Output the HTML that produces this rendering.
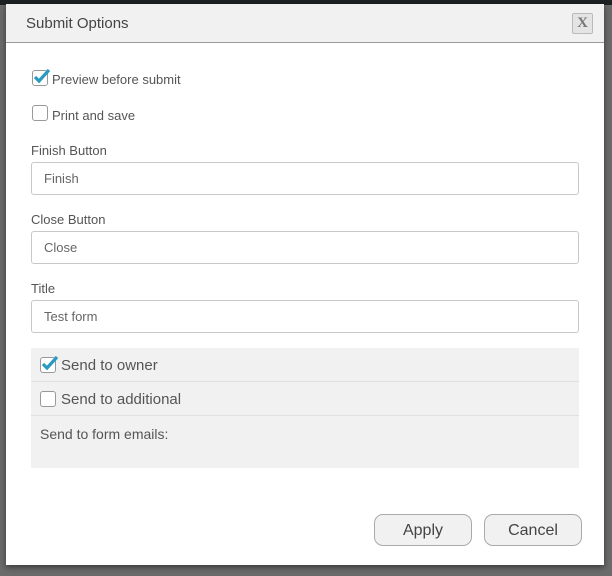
<!DOCTYPE html>
<html><head><style>
*{box-sizing:border-box;margin:0;padding:0}
body{width:612px;height:576px;background:#6b6b6b;position:relative;overflow:hidden;font-family:"Liberation Sans",sans-serif;color:#333}
.top{position:absolute;left:0;top:0;width:612px;height:5px;background:#1d2225}
.dlg{position:absolute;left:6px;top:4px;width:598px;height:561px;background:#fff;box-shadow:0 2px 6px rgba(0,0,0,.5)}
.hd{height:39px;background:#f1f1f1;border-bottom:1px solid #9a9a9a;position:relative}
.hd span{position:absolute;left:20px;top:11px;font-size:15px;color:#444}
.x{position:absolute;right:11px;top:9px;width:21px;height:21px;border:1px solid #bbb;background:#e4e4e4;border-radius:2px;font-weight:bold;color:#777;font-size:15px;text-align:center;line-height:19px;font-family:"Liberation Serif",serif}
.a{position:absolute;font-size:13px;color:#555}
.cb{position:absolute;width:16px;height:16px;border:1px solid #999;border-radius:3px;background:#fff}
.inp{position:absolute;left:25px;width:548px;height:33px;border:1px solid #c8c8c8;border-radius:3px;font-size:13px;color:#666;padding:8px 12px}
.pan{position:absolute;left:25px;top:344px;width:548px;height:120px;background:#f1f1f1}
.row{height:34px;border-bottom:1px solid #e0e0e0;position:relative}
.btn{position:absolute;top:510px;width:98px;height:32px;border:1px solid #aaa;border-radius:9px;background:#f1f1f1;font-size:16px;text-align:center;line-height:32px;color:#444}
svg{position:absolute}
</style></head><body>
<div class="top"></div>
<div class="dlg">
<div class="hd"><span>Submit Options</span><div class="x">X</div></div>
<div class="cb" style="left:26px;top:66px"></div>
<svg style="left:27px;top:63px" width="18" height="18" viewBox="0 0 18 18"><path d="M2 10 L6 14 L16 3" stroke="#2a9ac0" stroke-width="3.2" fill="none"/></svg>
<div class="a" style="left:46px;top:68px">Preview before submit</div>
<div class="cb" style="left:26px;top:101px"></div>
<div class="a" style="left:46px;top:104px">Print and save</div>
<div class="a" style="left:25px;top:139px">Finish Button</div>
<div class="inp" style="top:158px">Finish</div>
<div class="a" style="left:25px;top:208px">Close Button</div>
<div class="inp" style="top:227px">Close</div>
<div class="a" style="left:25px;top:277px">Title</div>
<div class="inp" style="top:296px">Test form</div>
<div class="pan">
<div class="row"></div><div class="row"></div>
</div>
<div class="cb" style="left:34px;top:353px"></div>
<svg style="left:35px;top:350px" width="18" height="18" viewBox="0 0 18 18"><path d="M2 10 L6 14 L16 3" stroke="#2a9ac0" stroke-width="3.2" fill="none"/></svg>
<div class="a" style="left:55px;top:353px;font-size:15px">Send to owner</div>
<div class="cb" style="left:34px;top:387px"></div>
<div class="a" style="left:55px;top:387px;font-size:15px">Send to additional</div>
<div class="a" style="left:34px;top:422px;font-size:14px">Send to form emails:</div>
<div class="btn" style="left:368px">Apply</div>
<div class="btn" style="left:478px">Cancel</div>
</div>
</body></html>
